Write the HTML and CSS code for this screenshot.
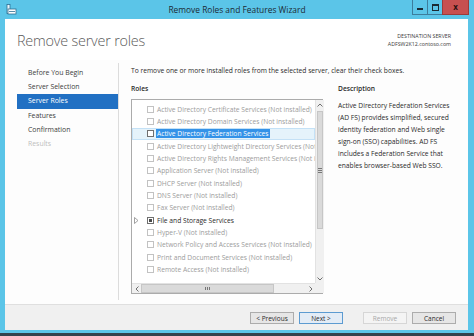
FILE: index.html
```html
<!DOCTYPE html>
<html lang="en">
<head>
    <meta charset="UTF-8">
    <title>Remove Roles and Features Wizard</title>
    <link rel="stylesheet" href="styles.css">
</head>
<body>
    <div class="window">
        <div class="titlebar">
            <svg class="app-icon" width="11" height="11" viewBox="0 0 11 11">
                <rect x="1" y="0.5" width="3" height="9" fill="#eaf6fb" stroke="#2d6f93" stroke-width="0.8"/>
                <rect x="2" y="5" width="8" height="5" fill="#ffffff" stroke="#2d6f93" stroke-width="0.8"/>
                <line x1="3" y1="7.5" x2="9" y2="7.5" stroke="#2d6f93" stroke-width="0.8"/>
            </svg>
            <div class="title">Remove Roles and Features Wizard</div>
            <div class="controls">
                <span class="ctl ctl-min"><i></i></span>
                <span class="ctl ctl-max"><i></i></span>
                <span class="ctl ctl-close">x</span>
            </div>
        </div>

        <div class="client">
            <div class="head">
                <h1>Remove server roles</h1>
                <div class="dest">
                    <div>DESTINATION SERVER</div>
                    <div>ADFSW2K12.contoso.com</div>
                </div>
            </div>

            <div class="main">
                <nav class="steps">
                    <div class="step">Before You Begin</div>
                    <div class="step">Server Selection</div>
                    <div class="step active">Server Roles</div>
                    <div class="step">Features</div>
                    <div class="step">Confirmation</div>
                    <div class="step off">Results</div>
                </nav>

                <div class="content">
                    <p class="intro">To remove one or more installed roles from the selected server, clear their check boxes.</p>
                    <div class="cols">
                        <div class="roles">
                            <div class="label">Roles</div>
                            <div class="listbox">
                                <div class="list">
                                    <div class="row off"><span class="exp"></span><span class="chk"></span><span class="txt">Active Directory Certificate Services (Not installed)</span></div>
                                    <div class="row off"><span class="exp"></span><span class="chk"></span><span class="txt">Active Directory Domain Services (Not installed)</span></div>
                                    <div class="row selected"><span class="exp"></span><span class="chk"></span><span class="txt">Active Directory Federation Services</span></div>
                                    <div class="row off"><span class="exp"></span><span class="chk"></span><span class="txt">Active Directory Lightweight Directory Services (Not installed)</span></div>
                                    <div class="row off"><span class="exp"></span><span class="chk"></span><span class="txt">Active Directory Rights Management Services (Not installed)</span></div>
                                    <div class="row off"><span class="exp"></span><span class="chk"></span><span class="txt">Application Server (Not installed)</span></div>
                                    <div class="row off"><span class="exp"></span><span class="chk"></span><span class="txt">DHCP Server (Not installed)</span></div>
                                    <div class="row off"><span class="exp"></span><span class="chk"></span><span class="txt">DNS Server (Not installed)</span></div>
                                    <div class="row off"><span class="exp"></span><span class="chk"></span><span class="txt">Fax Server (Not installed)</span></div>
                                    <div class="row">
                                        <span class="exp">
                                            <svg width="5" height="7" viewBox="0 0 5 7"><path d="M0.5 0.5 L4 3.5 L0.5 6.5 Z" fill="none" stroke="#8a8a8a" stroke-width="0.8"/></svg>
                                        </span>
                                        <span class="chk part"><i></i></span><span class="txt">File and Storage Services</span>
                                    </div>
                                    <div class="row off"><span class="exp"></span><span class="chk"></span><span class="txt">Hyper-V (Not installed)</span></div>
                                    <div class="row off"><span class="exp"></span><span class="chk"></span><span class="txt">Network Policy and Access Services (Not installed)</span></div>
                                    <div class="row off"><span class="exp"></span><span class="chk"></span><span class="txt">Print and Document Services (Not installed)</span></div>
                                    <div class="row off"><span class="exp"></span><span class="chk"></span><span class="txt">Remote Access (Not installed)</span></div>
                                </div>
                                <div class="vscroll">
                                    <span class="arrow">
                                        <svg width="6" height="4" viewBox="0 0 6 4"><path d="M0.5 3.5 L3 1 L5.5 3.5" fill="none" stroke="#606060" stroke-width="0.9"/></svg>
                                    </span>
                                    <div class="track-v">
                                        <div class="thumb-v"><b></b><b></b><b></b></div>
                                    </div>
                                    <span class="arrow">
                                        <svg width="6" height="4" viewBox="0 0 6 4"><path d="M0.5 0.5 L3 3 L5.5 0.5" fill="none" stroke="#606060" stroke-width="0.9"/></svg>
                                    </span>
                                </div>
                                <div class="hscroll">
                                    <span class="arrow">
                                        <svg width="4" height="6" viewBox="0 0 4 6"><path d="M3.5 0.5 L1 3 L3.5 5.5" fill="none" stroke="#606060" stroke-width="0.9"/></svg>
                                    </span>
                                    <div class="track-h">
                                        <div class="thumb-h"><b></b><b></b><b></b></div>
                                    </div>
                                    <span class="arrow">
                                        <svg width="4" height="6" viewBox="0 0 4 6"><path d="M0.5 0.5 L3 3 L0.5 5.5" fill="none" stroke="#606060" stroke-width="0.9"/></svg>
                                    </span>
                                </div>
                                <div class="corner"></div>
                            </div>
                        </div>

                        <div class="desc">
                            <div class="label">Description</div>
                            <p>Active Directory Federation Services (AD FS) provides simplified, secured identity federation and Web single sign-on (SSO) capabilities. AD FS includes a Federation Service that enables browser-based Web SSO.</p>
                        </div>
                    </div>
                </div>
            </div>

            <div class="foot">
                <button type="button" class="btn">&lt; Previous</button>
                <button type="button" class="btn btn-default">Next &gt;</button>
                <button type="button" class="btn btn-off gap">Remove</button>
                <button type="button" class="btn">Cancel</button>
            </div>
        </div>
        <div class="taskbar"></div>
    </div>
</body>
</html>
```

FILE: styles.css
```css
body {
    margin: 0;
    font-family: "Open Sans", "Noto Sans", sans-serif;
    font-size: 6.7px;
    color: #1e1e1e;
    background: #5bc5e8;
}

.window {
    width: 474px;
    height: 336px;
    background: #5bc5e8;
    display: flex;
    flex-direction: column;
}

/* title bar */
.titlebar {
    height: 19px;
    display: grid;
    grid-template-columns: 1fr auto 1fr;
    align-items: start;
}

.app-icon {
    margin: 4px 0 0 6px;
}

.title {
    font-size: 8.4px;
    line-height: 19px;
    color: #1b2a33;
}

.controls {
    justify-self: end;
    display: flex;
    margin-right: 5px;
}

.ctl {
    height: 15px;
    border: 1px solid #3d7d9c;
    border-top: none;
    display: flex;
    align-items: center;
    justify-content: center;
    box-sizing: border-box;
}

.ctl-min,
.ctl-max {
    width: 16px;
    margin-right: -1px;
}

.ctl-min i {
    width: 6px;
    height: 2px;
    background: #1b2a33;
    margin-top: 4px;
}

.ctl-max i {
    width: 5px;
    height: 4px;
    border: 1px solid #1b2a33;
    border-top-width: 2px;
}

.ctl-close {
    width: 27px;
    background: #c75050;
    border-color: #9b3b3b;
    color: #2a1010;
    font-weight: bold;
    font-size: 8px;
    line-height: 1;
}

/* client area */
.client {
    flex: 1;
    margin: 0 6px 0 5px;
    background: #fdfdfd;
    display: flex;
    flex-direction: column;
}

.head {
    height: 41px;
    display: flex;
    justify-content: space-between;
    align-items: center;
    padding: 0 17px 0 12px;
    background: #fff;
}

h1 {
    margin: 0;
    font-weight: 300;
    font-size: 14.4px;
    letter-spacing: -0.2px;
    color: #5a5a5a;
    padding-top: 2px;
}

.dest {
    text-align: right;
    font-size: 5.3px;
    line-height: 8.3px;
    color: #3a3a3a;
    padding-top: 1px;
}

.main {
    flex: 1;
    display: flex;
}

.steps {
    width: 101px;
    margin-left: 12px;
    margin-top: 3px;
    padding-top: 3px;
    border-right: 1px solid #dcdcdc;
    margin-bottom: 4px;
}

.step {
    height: 14.2px;
    line-height: 14.2px;
    padding-left: 11px;
    font-size: 6.9px;
    color: #3c3c3c;
}

.step.active {
    background: #2170c3;
    color: #fff;
}

.step.off {
    color: #bdbdbd;
}

.content {
    flex: 1;
    padding-left: 12px;
}

.intro {
    margin: 6px 0 0;
    line-height: 9px;
    color: #2a2a2a;
}

.cols {
    display: flex;
    gap: 15px;
    margin-top: 9px;
}

.label {
    font-weight: 600;
    line-height: 9px;
    color: #2a2a2a;
}

/* roles list */
.listbox {
    margin-top: 6px;
    width: 192px;
    height: 195px;
    box-sizing: border-box;
    border: 1px solid #ababab;
    display: grid;
    grid-template-columns: 183px 9px;
    grid-template-rows: 1fr 10px;
    background: #fff;
}

.list {
    overflow: hidden;
    padding-top: 3px;
}

.row {
    height: 12.35px;
    display: flex;
    align-items: center;
    padding-left: 2px;
    white-space: nowrap;
    box-sizing: border-box;
    color: #2a2a2a;
}

.row.off {
    color: #9c9c9c;
}

.row.selected {
    background: #e5f3fb;
    border: 1px solid #c4e1f6;
    padding-left: 1px;
}

.row.selected .txt {
    background: #3392e8;
    color: #fff;
    padding: 0 1px;
    margin-left: -1px;
}

.exp {
    flex: 0 0 13px;
    display: flex;
    align-items: center;
}

.chk {
    flex: 0 0 7px;
    height: 7px;
    box-sizing: border-box;
    border: 1px solid #c2c2c2;
    background: #fff;
    margin-right: 3px;
    display: flex;
    align-items: center;
    justify-content: center;
}

.row.selected .chk,
.chk.part {
    border-color: #6f6f6f;
}

.chk.part i {
    width: 3px;
    height: 3px;
    background: #4a4a4a;
}

.vscroll {
    display: flex;
    flex-direction: column;
    background: #f0f0f0;
    border-left: 1px solid #e2e2e2;
}

.hscroll {
    display: flex;
    background: #f0f0f0;
    border-top: 1px solid #e2e2e2;
}

.corner {
    background: #f0f0f0;
}

.arrow {
    flex: 0 0 9px;
    display: flex;
    align-items: center;
    justify-content: center;
}

.track-v {
    flex: 1;
    padding-top: 2px;
}

.thumb-v {
    height: 116px;
    margin: 0 1px;
    background: #dadada;
    border: 1px solid #c6c6c6;
    display: flex;
    flex-direction: column;
    align-items: center;
    justify-content: center;
    gap: 1px;
}

.thumb-v b {
    width: 4px;
    height: 1px;
    background: #777;
}

.track-h {
    flex: 1;
}

.thumb-h {
    width: 133px;
    height: 100%;
    box-sizing: border-box;
    background: #dadada;
    border: 1px solid #c6c6c6;
    display: flex;
    align-items: center;
    justify-content: center;
    gap: 1px;
}

.thumb-h b {
    width: 1px;
    height: 3px;
    background: #777;
}

.desc {
    width: 114px;
}

.desc p {
    margin: 7px 0 0;
    line-height: 12px;
    color: #2a2a2a;
}

/* footer */
.foot {
    height: 26px;
    background: #f0f0f0;
    border-top: 1px solid #dfdfdf;
    display: flex;
    justify-content: flex-end;
    align-items: flex-start;
    padding: 7px 12px 0 0;
    box-sizing: border-box;
}

.btn {
    width: 44px;
    height: 12px;
    margin-left: 5px;
    padding: 0;
    font-family: inherit;
    font-size: 6.5px;
    color: #2a2a2a;
    background: #e6e6e6;
    border: 1px solid #acacac;
}

.btn-default {
    background: #e3ecf6;
    border-color: #5c9bd1;
}

.btn-off {
    background: #f4f4f4;
    border-color: #d6d6d6;
    color: #a8a8a8;
}

.btn.gap {
    margin-left: 20px;
}

.taskbar {
    height: 3px;
    margin-top: 3px;
    background: #33424c;
}
```
